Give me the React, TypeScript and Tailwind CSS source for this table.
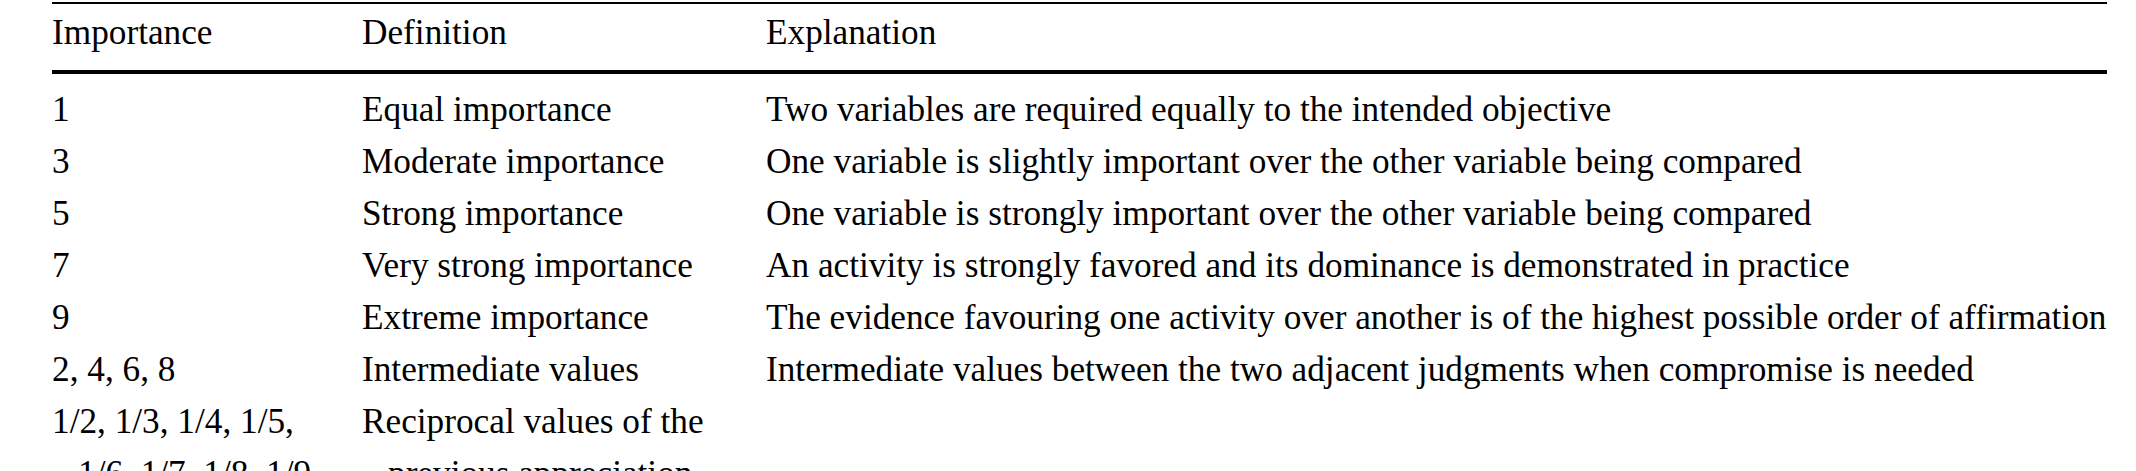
const rows: { value: string[]; definition: string[]; explanation: string }[] = [
  { value: ['1'], definition: ['Equal importance'], explanation: 'Two variables are required equally to the intended objective' },
  { value: ['3'], definition: ['Moderate importance'], explanation: 'One variable is slightly important over the other variable being compared' },
  { value: ['5'], definition: ['Strong importance'], explanation: 'One variable is strongly important over the other variable being compared' },
  { value: ['7'], definition: ['Very strong importance'], explanation: 'An activity is strongly favored and its dominance is demonstrated in practice' },
  { value: ['9'], definition: ['Extreme importance'], explanation: 'The evidence favouring one activity over another is of the highest possible order of affirmation' },
  { value: ['2, 4, 6, 8'], definition: ['Intermediate values'], explanation: 'Intermediate values between the two adjacent judgments when compromise is needed' },
  {
    value: ['1/2, 1/3, 1/4, 1/5,', '1/6, 1/7, 1/8, 1/9'],
    definition: ['Reciprocal values of the', 'previous appreciation'],
    explanation: '',
  },
]

function Cell({ lines }: { lines: string[] }) {
  return (
    <div className="whitespace-nowrap">
      {lines.map((l, i) => (
        <div key={i} className={i > 0 ? 'pl-[26px]' : ''}>
          {l}
        </div>
      ))}
    </div>
  )
}

export default function App() {
  return (
    <div className="h-[471px] w-[2136px] overflow-hidden bg-white text-black">
      <div
        className="ml-[52px] mt-[2px] w-[2055px] text-[35.25px] leading-[52px]"
        style={{ fontFamily: '"Liberation Serif", "Times New Roman", serif' }}
      >
        <div className="grid grid-cols-[310px_404px_1fr] border-t-2 border-b-4 border-black pt-[3px] pb-[11px]">
          <div>Importance</div>
          <div>Definition</div>
          <div>Explanation</div>
        </div>
        <div className="pt-[10px]">
          {rows.map((r, i) => (
            <div key={i} className="grid grid-cols-[310px_404px_1fr]">
              <Cell lines={r.value} />
              <Cell lines={r.definition} />
              <div className="whitespace-nowrap">{r.explanation}</div>
            </div>
          ))}
        </div>
      </div>
    </div>
  )
}
